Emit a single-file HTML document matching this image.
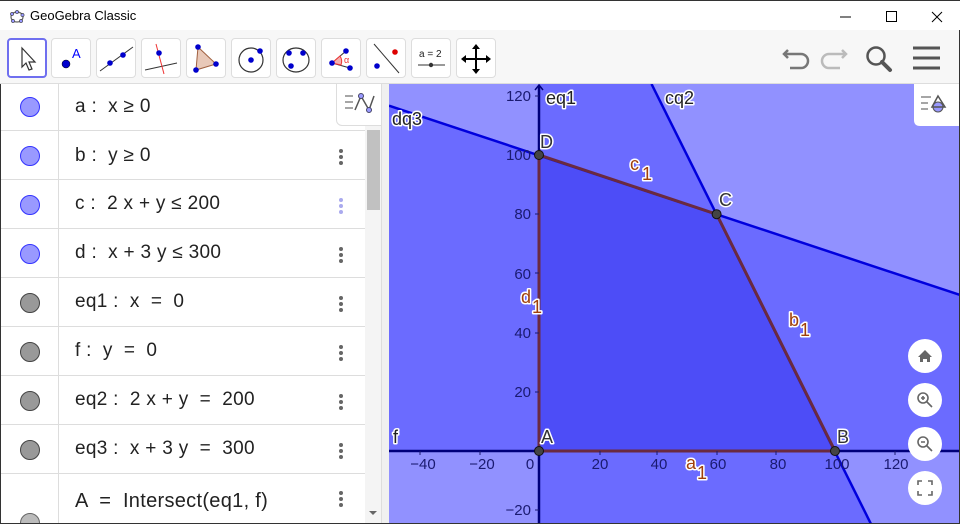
<!DOCTYPE html>
<html><head><meta charset="utf-8"><style>
*{margin:0;padding:0;box-sizing:border-box}
body{width:960px;height:524px;overflow:hidden;background:#fff;font-family:"Liberation Sans",sans-serif;position:relative}
.title{position:absolute;left:0;top:0;width:960px;height:30px;background:#fff;border-top:1px solid #333}
.title span{position:absolute;left:30px;top:7px;font-size:13px;color:#000}
.tb{position:absolute;left:0;top:30px;width:960px;height:54px;background:#f7f7f7;border-bottom:1px solid #ddd}
.btn{position:absolute;top:8px;width:40px;height:40px;background:#fff;border:1px solid #ddd;border-radius:4px}
.btn.sel{border:2px solid #6f6fef}
.alg{position:absolute;left:0;top:84px;width:389px;height:440px;background:#fff;border-left:1px solid #333;overflow:hidden}
.row{position:absolute;left:0;width:365px;border-bottom:1px solid #ddd}
.row .dot{position:absolute;left:19px;width:20px;height:20px;border-radius:50%}
.row .txt{position:absolute;left:74px;font-size:19px;color:#222;white-space:nowrap;letter-spacing:.3px}
.row .m{position:absolute;left:338px;width:4px}
.row .m i{display:block;width:4px;height:4px;border-radius:50%;background:#666;margin-bottom:2px}
.vline{position:absolute;left:58px;top:84px;width:1px;height:440px;background:#ddd}
</style></head><body>
<div class="title">
<svg style="position:absolute;left:9px;top:8px" width="16" height="15" viewBox="0 0 16 15"><ellipse cx="8" cy="8" rx="6" ry="5" fill="none" stroke="#666" stroke-width="1.2"/><g fill="#99f" stroke="#333" stroke-width=".6"><circle cx="3" cy="5" r="1.6"/><circle cx="8" cy="3" r="1.6"/><circle cx="13.5" cy="6" r="1.6"/><circle cx="12" cy="12" r="1.6"/><circle cx="4" cy="12" r="1.6"/></g></svg>
<span>GeoGebra Classic</span>
<svg style="position:absolute;left:830px;top:8px" width="120" height="16"><line x1="10" y1="8" x2="21" y2="8" stroke="#000"/><rect x="56.5" y="2.5" width="10" height="10" fill="none" stroke="#000"/><path d="M102 3L112 13M112 3L102 13" stroke="#000"/></svg>
</div>
<div class="tb">
<div class="btn sel" style="left:7px"><svg width="36" height="36"><path d="M13 8L13 27L17 23L20 30L23 29L20 22L26 22Z" fill="#fff" stroke="#333" stroke-width="1.2"/></svg></div>
<div class="btn" style="left:51px"><svg width="40" height="40"><circle cx="14" cy="25" r="4" fill="#00c" stroke="#000" stroke-width=".5"/><text x="20" y="19" font-size="13" fill="#00f" font-family="Liberation Sans">A</text></svg></div>
<div class="btn" style="left:96px"><svg width="40" height="40"><line x1="3" y1="32" x2="36" y2="8" stroke="#333"/><circle cx="13" cy="24" r="2.8" fill="#00c"/><circle cx="26" cy="16" r="2.8" fill="#00c"/></svg></div>
<div class="btn" style="left:141px"><svg width="40" height="40"><line x1="3" y1="31" x2="35" y2="24" stroke="#333"/><line x1="14" y1="5" x2="22" y2="35" stroke="#e33"/><circle cx="17" cy="14" r="2.8" fill="#00c"/></svg></div>
<div class="btn" style="left:186px"><svg width="40" height="40"><path d="M11 8L29 25L9 31Z" fill="#e8c8b8" stroke="#a06040"/><circle cx="11" cy="8" r="2.8" fill="#00c"/><circle cx="29" cy="25" r="2.8" fill="#00c"/><circle cx="9" cy="31" r="2.8" fill="#00c"/></svg></div>
<div class="btn" style="left:231px"><svg width="40" height="40"><circle cx="19" cy="21" r="12" fill="none" stroke="#333" stroke-width="1.2"/><circle cx="19" cy="21" r="2.8" fill="#00c"/><circle cx="28" cy="12" r="2.8" fill="#00c"/></svg></div>
<div class="btn" style="left:276px"><svg width="40" height="40"><ellipse cx="19" cy="21" rx="13" ry="12" fill="none" stroke="#333" stroke-width="1.2"/><circle cx="12" cy="14" r="2.8" fill="#00c"/><circle cx="26" cy="14" r="2.8" fill="#00c"/><circle cx="14" cy="27" r="2.8" fill="#00c"/></svg></div>
<div class="btn" style="left:321px"><svg width="40" height="40"><path d="M10 24L24 12M10 24L28 29" stroke="#333"/><path d="M10 24L18 17A10 10 0 0 1 19 26Z" fill="#f4b0b0" stroke="#e33"/><text x="22" y="24" font-size="9" fill="#e33">α</text><circle cx="10" cy="24" r="2.8" fill="#00c"/><circle cx="24" cy="12" r="2.8" fill="#00c"/><circle cx="28" cy="29" r="2.8" fill="#00c"/></svg></div>
<div class="btn" style="left:366px"><svg width="40" height="40"><line x1="7" y1="5" x2="32" y2="34" stroke="#333"/><circle cx="28" cy="13" r="2.8" fill="#d00"/><circle cx="10" cy="27" r="2.8" fill="#00c"/></svg></div>
<div class="btn" style="left:411px"><svg width="40" height="40"><text x="7" y="18" font-size="10" fill="#222">a = 2</text><line x1="6" y1="26" x2="33" y2="26" stroke="#333"/><circle cx="19" cy="26" r="2.2" fill="#333"/></svg></div>
<div class="btn" style="left:456px"><svg width="40" height="40"><path d="M19 7V33M6 20H32" stroke="#000" stroke-width="2"/><path d="M19 5L15 10H23ZM19 35L15 30H23ZM4 20L9 16V24ZM34 20L29 16V24Z" fill="#000"/></svg></div>
<svg style="position:absolute;left:780px;top:12px" width="170" height="34"><path d="M8 8L4 12L8 16M4 12H21A7 7 0 0 1 21 26H10" fill="none" stroke="#777" stroke-width="2.5"/><path d="M62 8L66 12L62 16M66 12H49A7 7 0 0 0 49 26H60" fill="none" stroke="#bbb" stroke-width="2.5"/><circle cx="96" cy="14" r="8.5" fill="none" stroke="#555" stroke-width="2.5"/><path d="M102 20L110 28" stroke="#555" stroke-width="4" stroke-linecap="round"/><path d="M133 6H160M133 16H160M133 26H160" stroke="#555" stroke-width="3"/></svg>
</div>

<div class="alg">
<div class="row" style="top:0;height:47px"><div class="dot" style="top:13px;background:#99f;border:1px solid #33f"></div><div class="txt" style="top:12px">a :&nbsp; x ≥ 0</div></div>
<div class="row" style="top:47px;height:49px"><div class="dot" style="top:15px;background:#99f;border:1px solid #33f"></div><div class="txt" style="top:14px">b :&nbsp; y ≥ 0</div><div class="m" style="top:18px"><i></i><i></i><i></i></div></div>
<div class="row" style="top:96px;height:49px"><div class="dot" style="top:15px;background:#99f;border:1px solid #33f"></div><div class="txt" style="top:13px">c :&nbsp; 2 x + y ≤ 200</div><div class="m" style="top:18px"><i style="background:#aae"></i><i style="background:#aae"></i><i style="background:#aae"></i></div></div>
<div class="row" style="top:145px;height:49px"><div class="dot" style="top:15px;background:#99f;border:1px solid #33f"></div><div class="txt" style="top:13px">d :&nbsp; x + 3 y ≤ 300</div><div class="m" style="top:18px"><i></i><i></i><i></i></div></div>
<div class="row" style="top:194px;height:49px"><div class="dot" style="top:15px;background:#999;border:1px solid #444"></div><div class="txt" style="top:13px">eq1 :&nbsp; x &nbsp;= &nbsp;0</div><div class="m" style="top:18px"><i></i><i></i><i></i></div></div>
<div class="row" style="top:243px;height:49px"><div class="dot" style="top:15px;background:#999;border:1px solid #444"></div><div class="txt" style="top:13px">f :&nbsp; y &nbsp;= &nbsp;0</div><div class="m" style="top:18px"><i></i><i></i><i></i></div></div>
<div class="row" style="top:292px;height:49px"><div class="dot" style="top:15px;background:#999;border:1px solid #444"></div><div class="txt" style="top:13px">eq2 :&nbsp; 2 x + y &nbsp;= &nbsp;200</div><div class="m" style="top:18px"><i></i><i></i><i></i></div></div>
<div class="row" style="top:341px;height:49px"><div class="dot" style="top:15px;background:#999;border:1px solid #444"></div><div class="txt" style="top:13px">eq3 :&nbsp; x + 3 y &nbsp;= &nbsp;300</div><div class="m" style="top:18px"><i></i><i></i><i></i></div></div>
<div class="row" style="top:390px;height:60px;border:none"><div class="dot" style="top:39px;background:#bbb;border:1px solid #666"></div><div class="txt" style="top:16px;font-size:20px">A &nbsp;= &nbsp;Intersect(eq1, f)</div><div class="m" style="top:17px"><i></i><i></i><i></i></div></div>
<div style="position:absolute;left:364px;top:42px;width:16px;height:398px;background:#f4f4f4"></div>
<div style="position:absolute;left:366px;top:46px;width:13px;height:80px;background:#c1c1c1"></div>
<div style="position:absolute;left:368px;top:427px;width:0;height:0;border-left:4px solid transparent;border-right:4px solid transparent;border-top:4px solid #666"></div>
<div style="position:absolute;left:335px;top:0;width:46px;height:42px;background:#fff;border:1px solid #ddd;border-top:none;border-radius:0 0 0 6px"><svg width="46" height="42"><path d="M8 12H16M8 18H16M8 24H16" stroke="#888" stroke-width="1.5"/><path d="M18 26L24 12L32 26L37 12" fill="none" stroke="#555" stroke-width="1.5"/><circle cx="24" cy="12" r="2.5" fill="#99f" stroke="#446"/><circle cx="32" cy="26" r="2.5" fill="#99f" stroke="#446"/></svg></div>
</div>
<div class="vline"></div>
<div style="position:absolute;left:381px;top:84px;width:8px;height:440px;background:#f0f0f0;border-left:1px solid #ddd"></div>

<svg style="position:absolute;left:389px;top:84px" width="571" height="440" viewBox="389 84 571 440" font-family="Liberation Sans">
<rect x="389" y="84" width="571" height="440" fill="#9191ff"/>
<g fill="#6b6bff">
<polygon points="389,451 389,105.7 539,155 539,451"/>
<polygon points="539,84 539,155 716.6,214.2 651.5,84"/>
<polygon points="716.6,214.2 960,295 960,451 835,451"/>
<polygon points="539,451 835,451 871,524 539,524"/>
</g>
<polygon points="539,451 539,155 716.6,214.2 835,451" fill="#4d4df7"/>
<line x1="389" y1="451" x2="960" y2="451" stroke="#00007a" stroke-width="2.5"/>
<line x1="539" y1="524" x2="539" y2="86" stroke="#00007a" stroke-width="2.5"/>
<path d="M535 90L539 85L543 90" fill="none" stroke="#00007a" stroke-width="1.5"/>
<line x1="389" y1="105.7" x2="960" y2="295" stroke="#0000dd" stroke-width="2.5"/>
<line x1="651.5" y1="84" x2="871" y2="524" stroke="#0000dd" stroke-width="2.5"/>
<polyline points="539,451 539,155 716.6,214.2 835,451 539,451" fill="none" stroke="#6a2a40" stroke-width="3"/>
<g fill="#1a1a70" font-size="15" text-anchor="middle">
<text x="423" y="469">−40</text><text x="482" y="469">−20</text><text x="530" y="469">0</text><text x="600" y="469">20</text><text x="659" y="469">40</text><text x="718" y="469">60</text><text x="778" y="469">80</text><text x="837" y="469">100</text><text x="896" y="469">120</text>
</g>
<g fill="#1a1a70" font-size="15" text-anchor="end">
<text x="531" y="101">120</text><text x="531" y="160">100</text><text x="531" y="219">80</text><text x="531" y="279">60</text><text x="531" y="338">40</text><text x="531" y="397">20</text><text x="531" y="515">−20</text>
</g>
<g stroke="#1a1a70" stroke-width="1"><path d="M420 451v4M480 451v4M600 451v4M657 451v4M717 451v4M776 451v4M835 451v4M895 451v4M535 96h4M535 155h4M535 214h4M535 273h4M535 333h4M535 392h4M535 510h4"/></g>
<g font-size="18" stroke="#fff" stroke-width="3" paint-order="stroke" stroke-linejoin="round">
<text x="546" y="104" fill="#222">eq1</text>
<text x="665" y="104" fill="#222">cq2</text>
<text x="392" y="125" fill="#222">dq3</text>
<text x="393" y="443" fill="#222">f</text>
<text x="540" y="148" fill="#333">D</text>
<text x="719" y="206" fill="#333">C</text>
<text x="541" y="443" fill="#333">A</text>
<text x="837" y="443" fill="#333">B</text>
<text x="630" y="170" fill="#a0400a">c</text><text x="642" y="180" fill="#a0400a">1</text>
<text x="789" y="326" fill="#a0400a">b</text><text x="800" y="336" fill="#a0400a">1</text>
<text x="521" y="303" fill="#a0400a">d</text><text x="532" y="313" fill="#a0400a">1</text>
<text x="686" y="469" fill="#a0400a">a</text><text x="697" y="479" fill="#a0400a">1</text>
</g>
<g fill="#444" stroke="#111" stroke-width="1"><circle cx="539" cy="155" r="4.5"/><circle cx="716.6" cy="214.2" r="4.5"/><circle cx="539" cy="451" r="4.5"/><circle cx="835" cy="451" r="4.5"/></g>
<path d="M914 84H960V126H920Q914 126 914 120Z" fill="#fff"/>
<g transform="translate(919,93)"><path d="M2 4H12M2 10H9M2 16H9" stroke="#888" stroke-width="1.5"/><circle cx="19" cy="14" r="5" fill="#99f" stroke="#555"/><path d="M19 3L26 14H13Z" fill="none" stroke="#555" stroke-width="1.5"/></g>
<g fill="#fff"><circle cx="925" cy="356" r="17"/><circle cx="925" cy="400" r="17"/><circle cx="925" cy="444" r="17"/><circle cx="925" cy="488" r="17"/></g>
<path d="M918 357L925 350L932 357H930V362H927V359H923V362H920V357Z" fill="#666"/>
<g fill="none" stroke="#666" stroke-width="1.6"><circle cx="923" cy="398" r="5"/><path d="M927 402L932 407M921 398H925M923 396V400"/><circle cx="923" cy="442" r="5"/><path d="M927 446L932 451M921 442H925"/><path d="M918 485V481H922M928 481H932V485M932 491V495H928M922 495H918V491"/></g>
</svg>
<div style="position:absolute;right:0;top:30px;width:1px;height:494px;background:#333"></div>
<div style="position:absolute;left:0;top:523px;width:960px;height:1px;background:#333"></div>
</body></html>
